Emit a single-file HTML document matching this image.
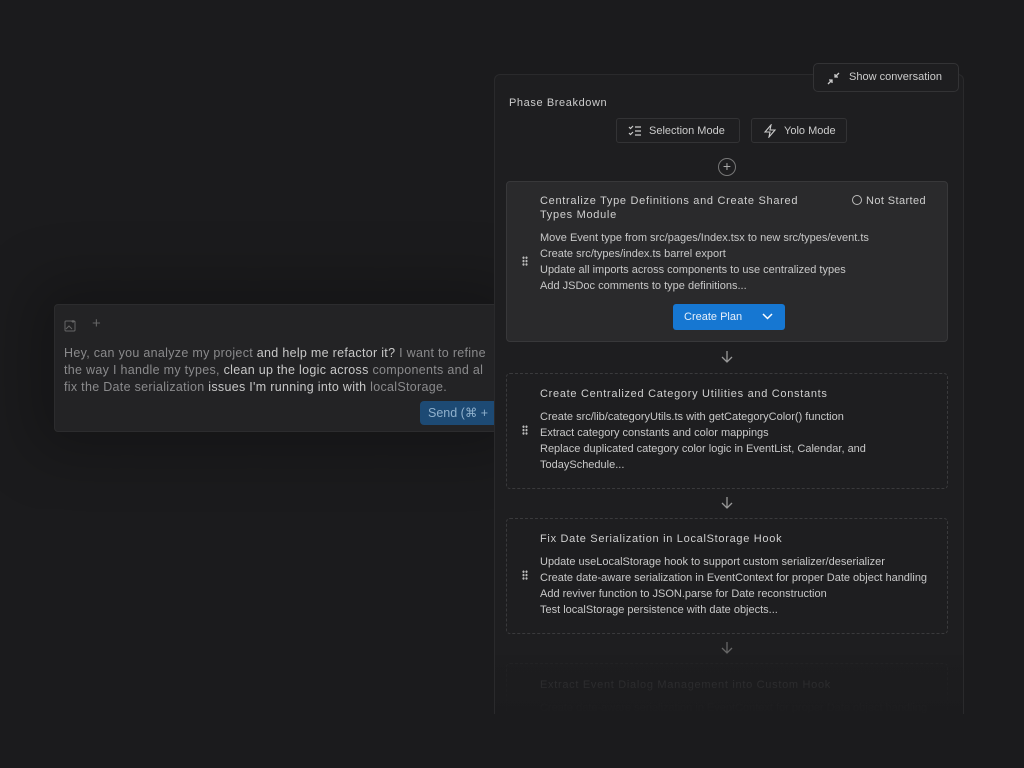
<!DOCTYPE html>
<html><head><meta charset="utf-8"><style>
*{box-sizing:border-box;margin:0;padding:0}
body{width:1024px;height:768px;background:#1b1b1d;font-family:"Liberation Sans",sans-serif;position:relative;overflow:hidden;color:#d0d0d0}
.chat{position:absolute;left:54px;top:304px;width:445px;height:128px;background:#232325;border:1px solid #2c2c2e;border-radius:4px;box-shadow:0 0 60px 20px rgba(0,0,0,.25)}
.chat p{position:absolute;left:9px;top:40px;font-size:12.5px;line-height:17px;color:#8a8a8c;letter-spacing:.3px;white-space:nowrap}
.chat p b{font-weight:normal;color:#c8c8c8}
.send{position:absolute;left:365px;top:96px;width:90px;height:24px;background:#1d4a74;border-radius:4px;color:#8fb0cc;font-size:12.5px;padding:4px 8px}
.panel{position:absolute;left:494px;top:74px;width:470px;height:640px;background:#1e1e20;border:1px solid #2a2a2c;border-bottom:none;border-radius:6px 6px 0 0;overflow:hidden}
.fade{position:absolute;left:-2px;right:-2px;top:580px;height:60px;background:linear-gradient(rgba(27,27,29,.3),#1b1b1d)}
.show{position:absolute;left:813px;top:63px;width:146px;height:29px;background:#1e1e20;border:1px solid #333335;border-radius:5px;font-size:11px;color:#ccc;padding:7px 0 0 35px}
.h{position:absolute;left:14px;top:22px;font-size:11px;letter-spacing:.6px;color:#ccc}
.btn{position:absolute;top:43px;height:25px;border:1px solid #333335;border-radius:3px;background:#1f1f21;font-size:11px;color:#ccc;padding:6px 0 0 32px}
.card{position:absolute;left:11px;width:442px;border-radius:4px}
.c1{top:106px;height:161px;background:#2a2a2c;border:1px solid #38383a}
.dash{border:1px dashed #3a3a3c}
.t{position:absolute;left:33px;font-size:11px;letter-spacing:.7px;color:#d0d0d0;line-height:14px}
.l{position:absolute;left:33px;font-size:11px;line-height:16px;color:#c8c8c8;white-space:nowrap}
.grip{position:absolute;left:15px;width:6px;height:10px;background:radial-gradient(circle,#bbb 1px,transparent 1.3px) 0 0/3px 3.4px}
.arrow{position:absolute;left:226px}
</style></head><body>
<div class="chat">
<svg style="position:absolute;left:9px;top:14px" width="13" height="13" viewBox="0 0 13 13" fill="none" stroke="#666" stroke-width="1"><rect x="1" y="2" width="10" height="10" rx="1"/><path d="M2 10l3-3 3 3M9 1v3M7.5 2.5h3"/></svg>
<div style="position:absolute;left:37px;top:10px;color:#666;font-size:15px">+</div>
<p>Hey, can you analyze my project <b>and help me refactor it?</b> I want to refine<br>the way I handle my types, <b>clean up the logic across</b> components and al<br>fix the Date serialization <b>issues I'm running into with</b> localStorage.</p>
<div class="send">Send (⌘ +</div>
</div>
<div class="panel">
<div class="h">Phase Breakdown</div>
<div class="btn" style="left:121px;width:124px">Selection Mode
<svg style="position:absolute;left:11px;top:6px" width="14" height="12" viewBox="0 0 14 12" fill="none" stroke="#ccc" stroke-width="1.2"><path d="M1 2l1.5 1.5L5 1M1 8l1.5 1.5L5 7M7 2h6M7 6h6M7 10h6"/></svg></div>
<div class="btn" style="left:256px;width:96px">Yolo Mode
<svg style="position:absolute;left:11px;top:5px" width="14" height="14" viewBox="0 0 14 14" fill="none" stroke="#ccc" stroke-width="1.1"><path d="M8 1L2 8h5l-1 5 6-7H7z"/></svg></div>
<div style="position:absolute;left:223px;top:83px;width:18px;height:18px;border:1px solid #777;border-radius:50%;color:#aaa;font-size:14px;text-align:center;line-height:15px">+</div>
<div class="card c1">
<div class="t" style="top:12px">Centralize Type Definitions and Create Shared<br>Types Module</div>
<div style="position:absolute;left:345px;top:13px;font-size:11px;letter-spacing:.4px;color:#ccc"><span style="display:inline-block;width:10px;height:10px;border:1px solid #bbb;border-radius:50%;vertical-align:-1px;margin-right:4px"></span>Not Started</div>
<div class="l" style="top:48px">Move Event type from src/pages/Index.tsx to new src/types/event.ts<br>Create src/types/index.ts barrel export<br>Update all imports across components to use centralized types<br>Add JSDoc comments to type definitions...</div>
<div class="grip" style="top:74px"></div>
<div style="position:absolute;left:166px;top:122px;width:112px;height:26px;background:#1677d2;border-radius:3px;color:#e8f0fa;font-size:11px;padding:7px 0 0 11px">Create Plan<svg style="position:absolute;left:89px;top:9px" width="11" height="7" viewBox="0 0 11 7" fill="none" stroke="#fff" stroke-width="1.5"><path d="M1 1l4.5 4.5L10 1"/></svg></div>
</div>
<svg class="arrow" style="top:275px" width="12" height="13" viewBox="0 0 12 13" fill="none" stroke="#999" stroke-width="1.3"><path d="M6 1v11M1 7l5 5 5-5"/></svg>
<div class="card dash" style="top:298px;height:116px">
<div class="t" style="top:13px">Create Centralized Category Utilities and Constants</div>
<div class="l" style="top:35px">Create src/lib/categoryUtils.ts with getCategoryColor() function<br>Extract category constants and color mappings<br>Replace duplicated category color logic in EventList, Calendar, and<br>TodaySchedule...</div>
<div class="grip" style="top:51px"></div>
</div>
<svg class="arrow" style="top:421px" width="12" height="13" viewBox="0 0 12 13" fill="none" stroke="#999" stroke-width="1.3"><path d="M6 1v11M1 7l5 5 5-5"/></svg>
<div class="card dash" style="top:443px;height:116px">
<div class="t" style="top:13px">Fix Date Serialization in LocalStorage Hook</div>
<div class="l" style="top:35px">Update useLocalStorage hook to support custom serializer/deserializer<br>Create date-aware serialization in EventContext for proper Date object handling<br>Add reviver function to JSON.parse for Date reconstruction<br>Test localStorage persistence with date objects...</div>
<div class="grip" style="top:51px"></div>
</div>
<svg class="arrow" style="top:566px" width="12" height="13" viewBox="0 0 12 13" fill="none" stroke="#666" stroke-width="1.3"><path d="M6 1v11M1 7l5 5 5-5"/></svg>
<div class="card dash" style="top:588px;height:80px;border-color:#262628">
<div class="t" style="top:14px;color:#4a4a4c">Extract Event Dialog Management into Custom Hook</div>
<div class="l" style="top:36px;color:#333335">Create date-aware serialization in EventContext for proper Date object handling</div>
</div>
<div class="fade"></div>
</div>
<div class="show">Show conversation
<svg style="position:absolute;left:13px;top:8px" width="13" height="13" viewBox="0 0 13 13" fill="none" stroke="#ccc" stroke-width="1.3"><path d="M12 1L8 5M8 2v3h3M1 12l4-4M2 8h3v3"/></svg></div>
</body></html>
